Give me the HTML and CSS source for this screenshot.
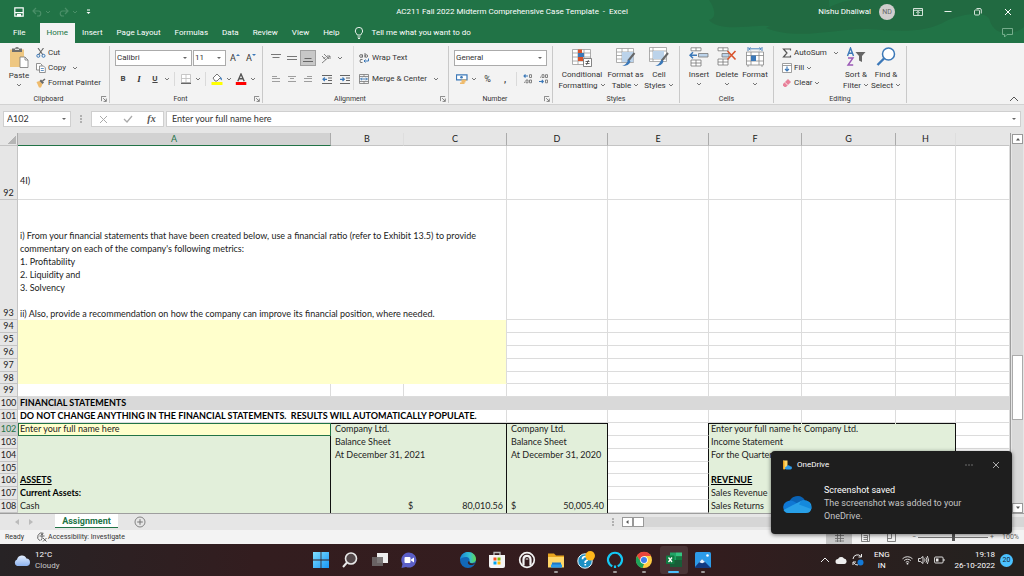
FILE: index.html
```html
<!DOCTYPE html>
<html lang="en">
<head>
<meta charset="utf-8">
<title>AC211 Fall 2022 Midterm Comprehensive Case Template - Excel</title>
<link rel="stylesheet" href="styles.css">
</head>
<body>
<svg class="defs" aria-hidden="true">
  <symbol id="chev" viewBox="0 0 6 6"><path d="M1 2l2 2 2-2" fill="none" stroke="#666" stroke-width=".9"/></symbol>
  <symbol id="launch" viewBox="0 0 7 7"><path d="M.5 6V.5H6M2.500 2.500l3.500 3.500M6.200 3v3.300H3" fill="none" stroke="#666" stroke-width=".9"/></symbol>
</svg>

<header class="top">
  <svg class="clouds" viewBox="0 0 340 43" preserveAspectRatio="none" aria-hidden="true">
    <path d="M25 0h120c0 14 3 22-8 26-20 7-45-2-62 0-18 1-42 4-50-6 8-2 6-12 0-20zM82 28c10-6 20-10 32-8 20 0 30-20 60-20h166v27c-12 10-30 8-34-6-2-12-32-6-44 0-22 13-50 10-78 8-30-1-70 12-102-1z" fill="#22643e" opacity=".6"/>
  </svg>
  <div class="titlebar">
    <div class="quick">
      <button aria-label="Save"><svg width="10" height="10" viewBox="0 0 10 10"><path d="M.8.8h8.400v8.400H.8z" fill="none" stroke="#fff" stroke-width="1.200"/><path d="M1 5h8v1.300H1zM3 7h4v2.500H3z" fill="#fff"/></svg></button>
      <button aria-label="Undo"><svg width="10" height="10" viewBox="0 0 10 10"><path d="M4 1L1 4l3 3M1 4h5.500c3 0 3 5 0 5H5" fill="none" stroke="#4a8f68" stroke-width="1.200"/></svg></button>
      <button class="tiny" aria-label="Undo list"><svg width="6" height="6" viewBox="0 0 6 6"><path d="M1 2l2 2 2-2" fill="none" stroke="#4a8f68"/></svg></button>
      <button aria-label="Redo"><svg width="10" height="10" viewBox="0 0 10 10"><path d="M6 1l3 3-3 3M9 4H3.500c-3 0-3 5 0 5H5" fill="none" stroke="#4a8f68" stroke-width="1.200"/></svg></button>
      <button class="tiny" aria-label="Redo list"><svg width="6" height="6" viewBox="0 0 6 6"><path d="M1 2l2 2 2-2" fill="none" stroke="#4a8f68"/></svg></button>
      <button class="tiny" aria-label="Customize toolbar"><svg width="5" height="6" viewBox="0 0 5 6"><path d="M1 .5h3v1H1zM.5 3h4l-2 2z" fill="#fff"/></svg></button>
    </div>
    <div class="doc">AC211 Fall 2022 Midterm Comprehensive Case Template &nbsp;-&nbsp; Excel</div>
    <div class="account">
      <span>Nishu Dhaliwal</span><span class="avatar">ND</span>
      <button aria-label="Ribbon display options"><svg width="10" height="10" viewBox="0 0 10 10"><path d="M.5 1.500h9v7h-9zM.5 3.300h9M5 8V4.500M3.300 6L5 4.300 6.700 6" fill="none" stroke="#e8f0ea" stroke-width=".9"/></svg></button>
      <button aria-label="Minimize"><svg width="10" height="10" viewBox="0 0 10 10"><path d="M1.500 4.500h7" stroke="#e8f0ea"/></svg></button>
      <button aria-label="Restore"><svg width="10" height="10" viewBox="0 0 10 10"><rect x="1.500" y="3" width="5" height="5" rx="1" fill="none" stroke="#e8f0ea" stroke-width=".9"/><path d="M3.500 1.500H7Q8.300 1.500 8.300 3v3.500" fill="none" stroke="#e8f0ea" stroke-width=".9"/></svg></button>
      <button aria-label="Close"><svg width="10" height="10" viewBox="0 0 10 10"><path d="M2 2l6 6M8 2L2 8" stroke="#fff"/></svg></button>
    </div>
  </div>
  <nav class="tabs">
    <button class="file">File</button><button class="active">Home</button><button>Insert</button><button>Page Layout</button><button>Formulas</button><button>Data</button><button>Review</button><button>View</button><button>Help</button>
    <button class="tell"><svg width="10" height="12" viewBox="0 0 10 12"><path d="M3.200 8C3 6.500 1.300 6 1.300 4a3.600 3.600 0 017.300 0C8.600 6 7 6.500 6.800 8zM3.500 10h3M4 11.500h2" fill="none" stroke="#fff" stroke-width=".9"/></svg>Tell me what you want to do</button>
    <button class="comments" aria-label="Comments"><svg width="11" height="10" viewBox="0 0 11 10"><path d="M.5.5h10v6H5L2.500 9V6.500h-2z" fill="none" stroke="#7fb394" stroke-width=".9"/></svg></button>
  </nav>
</header>

<section class="ribbon" aria-label="Home ribbon">
  <div class="group g-clip">
    <div class="body">
      <button class="big paste"><svg width="20" height="21" viewBox="0 0 20 21"><path d="M1 2.500h14V20H1z" fill="#eec782"/><path d="M3 1.500h3q0-1.500 2-1.500t2 1.500h3V5H3z" fill="#6d6d6d"/><path d="M6 2.300h4" stroke="#fff"/><path d="M11 10h5l3 3v7.500h-8z" fill="#fff" stroke="#777" stroke-width=".8"/><path d="M16 10v3h3" fill="none" stroke="#777" stroke-width=".8"/></svg><span>Paste</span><svg class="chev"><use href="#chev"/></svg></button>
      <div class="stack">
        <button><svg width="10" height="10" viewBox="0 0 10 10"><path d="M2 0l5 7M7.500 0l-5 7" stroke="#666" stroke-width="1.100"/><circle cx="2.300" cy="7.800" r="1.500" fill="none" stroke="#3b78b8"/><circle cx="7.500" cy="7.800" r="1.500" fill="none" stroke="#3b78b8"/></svg>Cut</button>
        <button><svg width="10" height="10" viewBox="0 0 10 10"><path d="M.5.5h4l1.500 1.500v5H.5z" fill="#fff" stroke="#777" stroke-width=".8"/><path d="M3.500 3h4l1.800 1.800v4.700H3.500z" fill="#fff" stroke="#777" stroke-width=".8"/><path d="M4.800 5.500h3M4.800 7.500h3" stroke="#3b78b8" stroke-width=".8"/></svg>Copy&nbsp;&nbsp;<svg class="chev"><use href="#chev"/></svg></button>
        <button><svg width="10" height="10" viewBox="0 0 10 10"><path d="M.5 4l3-1 3 3-1.500 3.500H3z" fill="#efbb6c"/><path d="M3.500 3l1.500-1.500L8 4.500 6.500 6z" fill="#666"/><path d="M6.500 3l2.500-2" stroke="#666" stroke-width="1.600"/></svg>Format Painter</button>
      </div>
    </div>
    <div class="label">Clipboard<svg class="launch"><use href="#launch"/></svg></div>
  </div>

  <div class="group g-font">
    <div class="body rows">
      <div class="row">
        <span class="pick w-font"><select aria-label="Font"><option>Calibri</option></select></span>
        <span class="pick w-size"><select aria-label="Font size"><option>11</option></select></span>
        <button class="ic fsize" aria-label="Increase font size">A<svg width="4" height="4" viewBox="0 0 4 4"><path d="M0 3l2-2 2 2" fill="#3b78b8"/></svg></button>
        <button class="ic fsize" aria-label="Decrease font size">A<svg width="4" height="4" viewBox="0 0 4 4"><path d="M0 1l2 2 2-2" fill="#3b78b8"/></svg></button>
      </div>
      <div class="row">
        <button class="ic w16"><b>B</b></button><button class="ic w16"><i>I</i></button><button class="ic w16"><u>U</u></button><button class="ic w10" aria-label="Underline style"><svg class="chev"><use href="#chev"/></svg></button>
        <i class="vr"></i>
        <button class="ic w16" aria-label="Borders"><svg width="10" height="10" viewBox="0 0 10 10"><path d="M.5 .5h9v8h-9zM5 .5v8M.5 4.500h9" fill="#fff" stroke="#bbb" stroke-width=".8"/><path d="M0 9.300h10" stroke="#444"/></svg></button><button class="ic w10" aria-label="Border list"><svg class="chev"><use href="#chev"/></svg></button>
        <i class="vr"></i>
        <button class="ic w16" aria-label="Fill color"><svg width="12" height="12" viewBox="0 0 12 12"><path d="M2 5l4-4 3.500 3.500L6 8H4z" fill="#fff" stroke="#666" stroke-width=".9"/><path d="M9.500 3.500q2 2 1 4l-1.500-2z" fill="#3b78b8"/><path d="M.5 9h11v3H.5z" fill="#ff0"/></svg></button><button class="ic w10" aria-label="Fill list"><svg class="chev"><use href="#chev"/></svg></button>
        <button class="ic w16" aria-label="Font color"><svg width="12" height="12" viewBox="0 0 12 12"><path d="M2.800 8.200L6 1l3.200 7.200M4 5.800h4" fill="none" stroke="#555" stroke-width="1.400"/><path d="M.8 9h10.500v3H.8z" fill="#f00"/></svg></button><button class="ic w10" aria-label="Color list"><svg class="chev"><use href="#chev"/></svg></button>
      </div>
    </div>
    <div class="label">Font<svg class="launch"><use href="#launch"/></svg></div>
  </div>

  <div class="group g-align">
    <div class="body">
      <div class="rows">
        <div class="row">
          <button class="ic w16" aria-label="Top align"><svg width="10" height="12" viewBox="0 0 10 12"><path d="M0 2.500h10M1.500 5.500h7" stroke="#777"/></svg></button>
          <button class="ic w16" aria-label="Middle align"><svg width="10" height="12" viewBox="0 0 10 12"><path d="M0 4.500h10M0 7.500h10" stroke="#777"/></svg></button>
          <button class="ic w16 on" aria-label="Bottom align"><svg width="10" height="12" viewBox="0 0 10 12"><path d="M1.500 6.500h7M0 9.500h10" stroke="#666"/></svg></button>
          <button class="ic w20" aria-label="Orientation"><svg width="11" height="11" viewBox="0 0 11 11"><path d="M1 3l4 4M3 1l5 5M4.500 4.500l-2 1M1 10l8-7M9 6V3H6" fill="none" stroke="#777" stroke-width=".9"/></svg></button><svg class="chev"><use href="#chev"/></svg>
        </div>
        <div class="row">
          <button class="ic w16" aria-label="Align left"><svg width="8" height="8" viewBox="0 0 8 8"><path d="M0 1.500h5M0 3.500h8M0 6.500h8" stroke="#888" stroke-width=".8"/></svg></button>
          <button class="ic w16" aria-label="Center"><svg width="8" height="8" viewBox="0 0 8 8"><path d="M0 1.500h8M2 3.500h4M0 6.500h8" stroke="#888" stroke-width=".8"/></svg></button>
          <button class="ic w16" aria-label="Align right"><svg width="8" height="8" viewBox="0 0 8 8"><path d="M3 1.500h5M0 3.500h8M0 6.500h8" stroke="#888" stroke-width=".8"/></svg></button>
          <button class="ic w20" aria-label="Decrease indent"><svg width="10" height="9" viewBox="0 0 10 9"><path d="M0 .5h10M6 3h4M6 5.500h4M0 8.500h10" stroke="#555" stroke-width=".9"/><path d="M5 4.300H1M2.800 2.500L1 4.300l1.800 1.700" fill="none" stroke="#3b78b8" stroke-width="1.200"/></svg></button>
          <button class="ic w16" aria-label="Increase indent"><svg width="10" height="9" viewBox="0 0 10 9"><path d="M0 .5h10M6 3h4M6 5.500h4M0 8.500h10" stroke="#555" stroke-width=".9"/><path d="M0 4.300h4M2.500 2.500l1.800 1.800L2.500 6" fill="none" stroke="#3b78b8" stroke-width="1.200"/></svg></button>
        </div>
      </div>
      <div class="rows wrapcol">
        <div class="row"><button class="txt"><svg width="10" height="10" viewBox="0 0 10 10"><circle cx="2" cy="3" r="1.400" fill="none" stroke="#666" stroke-width=".9"/><path d="M3.500 1.500V4.500M6 0v4.500" stroke="#666" stroke-width=".9"/><circle cx="7.300" cy="3" r="1.300" fill="none" stroke="#666" stroke-width=".9"/><path d="M3.500 6.500H1.500q-1 1.500 0 3h2" fill="none" stroke="#666" stroke-width=".9"/><path d="M9.500 5.500V8H5M6.500 6.500L5 8l1.500 1.500" fill="none" stroke="#3b78b8"/></svg>Wrap Text</button></div>
        <div class="row"><button class="txt"><svg width="10" height="10" viewBox="0 0 10 10"><path d="M.5.5h9v9h-9zM.5 2.500h9M.5 7.500h9M5 .5v2M5 7.500v2" fill="none" stroke="#777" stroke-width=".8"/><path d="M1.500 5h7M3 3.700L1.700 5 3 6.300M7 3.700L8.300 5 7 6.300" fill="none" stroke="#3b78b8" stroke-width=".9"/></svg>Merge &amp; Center</button><svg class="chev"><use href="#chev"/></svg></div>
      </div>
    </div>
    <div class="label">Alignment<svg class="launch"><use href="#launch"/></svg></div>
  </div>

  <div class="group g-num">
    <div class="body rows">
      <div class="row"><span class="pick w-num"><select aria-label="Number format"><option>General</option></select></span></div>
      <div class="row">
        <button class="ic w16" aria-label="Accounting format"><svg width="12" height="11" viewBox="0 0 12 11"><path d="M.5.8h10.500v5H.5z" fill="#fff" stroke="#3b78b8" stroke-width="1.200"/><circle cx="5.500" cy="3.300" r="1.300" fill="#3b78b8"/><path d="M5.500 5.500h5v1.500h-1v1.500H8.500V10H4V8.500h1.500z" fill="#efbb6c"/></svg></button><button class="ic w10" aria-label="Currency list"><svg class="chev"><use href="#chev"/></svg></button>
        <button class="ic w18 pct">%</button><button class="ic w16 pct"><b>,</b></button>
        <i class="vr"></i>
        <button class="ic w16" aria-label="Increase decimal"><svg width="10" height="10" viewBox="0 0 10 10"><path d="M5 2H1M2.500.5L1 2l1.500 1.500" fill="none" stroke="#3b78b8" stroke-width="1.100"/><path d="M6.500.7h2v2.800h-2zM3 6h2v2.800H3zM6.500 6h2v2.800h-2zM1 8.300h1" fill="none" stroke="#777" stroke-width=".9"/></svg></button>
        <button class="ic w16" aria-label="Decrease decimal"><svg width="10" height="10" viewBox="0 0 10 10"><path d="M0 7.500h4M2.800 6l1.500 1.500L2.800 9" fill="none" stroke="#3b78b8" stroke-width="1.100"/><path d="M3 .7h2v2.800H3zM6.500.7h2v2.800h-2zM6.500 6h2v2.800h-2zM1 3.200h1" fill="none" stroke="#777" stroke-width=".9"/></svg></button>
      </div>
    </div>
    <div class="label">Number<svg class="launch"><use href="#launch"/></svg></div>
  </div>

  <div class="group g-styles">
    <div class="body">
      <button class="big w48"><svg width="20" height="20" viewBox="0 0 20 20"><path d="M.5 2.500h18v15H.5zM.5 6h18M.5 10h18M.5 14h18M6 2.500v15M12 2.500v15" fill="#fff" stroke="#999" stroke-width=".8"/><path d="M6 2.500h4V6H6zM6 10h3v4H6z" fill="#d9532c"/><path d="M6 6h6v4H6z" fill="#3b78b8"/><path d="M6 10h5v4H6z" fill="#d9532c"/><path d="M11.500 11.500h8v8h-8z" fill="#fff" stroke="#666" stroke-width=".8"/><path d="M13.500 14.500h4M13.500 16.500h4M16.500 13l-2 5" stroke="#444" stroke-width=".8"/></svg><span>Conditional</span><span>Formatting <svg class="chev"><use href="#chev"/></svg></span></button>
      <button class="big w39"><svg width="20" height="20" viewBox="0 0 20 20"><path d="M.5 1.500h17v14H.5zM.5 5h17M.5 8.500h17M.5 12h17M6 1.500v14M12 1.500v14" fill="#fff" stroke="#999" stroke-width=".8"/><path d="M6 5h11.500v10H6z" fill="#bcd3ea"/><path d="M18.500 6L12 14" stroke="#666" stroke-width="2"/><path d="M12.500 12.500l2 2Q13 19 6 19q4-1 6.500-6.500z" fill="#3b78b8"/></svg><span>Format as</span><span>Table <svg class="chev"><use href="#chev"/></svg></span></button>
      <button class="big w28"><svg width="20" height="20" viewBox="0 0 20 20"><path d="M.5 .5h17v14H.5zM.5 4h17M4 .5v14M.5 12h17" fill="#fff" stroke="#999" stroke-width=".8"/><path d="M4 4h11v8H4z" fill="#bcd3ea"/><path d="M19 6l-6.500 8" stroke="#666" stroke-width="2"/><path d="M12.500 12.500l2 2Q13 19 6 19q4-1 6.500-6.500z" fill="#3b78b8"/></svg><span>Cell</span><span>Styles <svg class="chev"><use href="#chev"/></svg></span></button>
    </div>
    <div class="label">Styles</div>
  </div>

  <div class="group g-cells">
    <div class="body">
      <button class="big w28"><svg width="20" height="20" viewBox="0 0 20 20"><path d="M2 .8h10v3H2zM7 .8v3M2 13h10v6H2zM7 13v6M2 16h10" fill="#fff" stroke="#777" stroke-width=".8"/><path d="M9.500 6.500h9.500v3.500H9.500z" fill="#bcd3ea" stroke="#777" stroke-width=".8"/><path d="M8 8.300H1M4 5.300L1 8.300l3 3" fill="none" stroke="#3b78b8" stroke-width="1.500"/></svg><span>Insert</span><svg class="chev"><use href="#chev"/></svg></button>
      <button class="big w28"><svg width="20" height="20" viewBox="0 0 20 20"><path d="M1 .8h10v3H1zM6 .8v3M1 12h10v6H1zM6 12v6M1 15h10" fill="#fff" stroke="#777" stroke-width=".8"/><path d="M5 6.500h7V10H5z" fill="#bcd3ea" stroke="#777" stroke-width=".8"/><path d="M10.500 4l8 8.500M18.500 4l-8 8.500" stroke="#d9532c" stroke-width="1.600"/></svg><span>Delete</span><svg class="chev"><use href="#chev"/></svg></button>
      <button class="big w28"><svg width="20" height="20" viewBox="0 0 20 20"><path d="M1.500 5h17v13h-17zM1.500 8.500h17M1.500 14h17M6 5v13M14 5v13M3 18v2M17 18v2" fill="#fff" stroke="#888" stroke-width=".8"/><path d="M6 8.500h5V14H6z" fill="#3b78b8"/><path d="M4 1.800h12M5.500.3L4 1.800l1.500 1.500M14.500.3L16 1.800l-1.500 1.500M3 0v4M17 0v4" fill="none" stroke="#3b78b8" stroke-width=".9"/></svg><span>Format</span><svg class="chev"><use href="#chev"/></svg></button>
    </div>
    <div class="label">Cells</div>
  </div>

  <div class="group g-edit">
    <div class="body">
      <div class="stack">
        <button><svg width="10" height="10" viewBox="0 0 10 10"><path d="M8.500 2.500V1H1.500L5 5 1.500 9h7V7.500" fill="none" stroke="#555" stroke-width="1.200"/></svg>AutoSum&nbsp;&nbsp;<svg class="chev"><use href="#chev"/></svg></button>
        <button><svg width="10" height="10" viewBox="0 0 10 10"><path d="M.5.5h9v9h-9zM.5 2.500h9" fill="#fff" stroke="#888" stroke-width=".8"/><path d="M5 3.500v4.500M3 6l2 2 2-2" fill="none" stroke="#3b78b8" stroke-width="1.200"/></svg>Fill<svg class="chev"><use href="#chev"/></svg></button>
        <button><svg width="10" height="10" viewBox="0 0 10 10"><path d="M1 6l5-5 3 3-5 5H2.500L1 7.500z" fill="#e8819a"/><path d="M3 4.300l2.800 3" stroke="#fff" stroke-width=".8"/></svg>Clear<svg class="chev"><use href="#chev"/></svg></button>
      </div>
      <button class="big w30"><svg width="20" height="20" viewBox="0 0 20 20"><path d="M1.500 9L4.500 1l3 8M2.700 6.300h3.700" fill="none" stroke="#3b78b8" stroke-width="1.400"/><path d="M2 11h5l-5 7h5.200" fill="none" stroke="#9b59b6" stroke-width="1.400"/><path d="M9.500 5h10l-3.500 4v6l-3-1.500V9z" fill="#666"/></svg><span>Sort &amp;</span><span>Filter <svg class="chev"><use href="#chev"/></svg></span></button>
      <button class="big w30"><svg width="20" height="20" viewBox="0 0 20 20"><circle cx="12.500" cy="7" r="6" fill="#fff" stroke="#3b78b8" stroke-width="1.500"/><path d="M8 11.500L1.500 18" stroke="#3b78b8" stroke-width="2.400"/></svg><span>Find &amp;</span><span>Select <svg class="chev"><use href="#chev"/></svg></span></button>
    </div>
    <div class="label">Editing</div>
  </div>
  <button class="collapse" aria-label="Collapse the ribbon"><svg width="10" height="6" viewBox="0 0 10 6"><path d="M1 5l4-4 4 4" fill="none" stroke="#555"/></svg></button>
</section>

<div class="formulabar">
  <span class="pick namebox"><input type="text" aria-label="Name box" value="A102"></span>
  <span class="grip"></span>
  <div class="fx">
    <button aria-label="Cancel"><svg width="9" height="9" viewBox="0 0 9 9"><path d="M1 1l7 7M8 1L1 8" stroke="#aaa"/></svg></button>
    <button aria-label="Enter"><svg width="10" height="8" viewBox="0 0 10 8"><path d="M1 4l3 3 5-6" fill="none" stroke="#aaa" stroke-width="1.300"/></svg></button>
    <button aria-label="Insert function"><i>fx</i></button>
  </div>
  <span class="pick formula"><input type="text" aria-label="Formula" value="Enter your full name here"></span>
</div>

<main class="sheet">
  <div class="cells">
  <table>
    <colgroup><col class="c-n"><col class="c-a"><col class="c-b"><col class="c-c"><col class="c-d"><col class="c-e"><col class="c-f"><col class="c-g"><col class="c-h"><col></colgroup>
    <thead><tr><th class="corner"></th><th class="sel">A</th><th class="soft">B</th><th>C</th><th>D</th><th>E</th><th>F</th><th>G</th><th class="soft">H</th><th class="last"></th></tr></thead>
    <tbody>
      <tr class="r92"><th>92</th><td colspan="3">4I)<br>&nbsp;</td><td></td><td></td><td></td><td></td><td></td><td></td></tr>
      <tr class="r93"><th>93</th><td colspan="3" class="wrap">i) From your financial statements that have been created below, use a financial ratio (refer to Exhibit 13.5) to provide<br>commentary on each of the company's following metrics:<br>1. Profitability<br>2. Liquidity and<br>3. Solvency<br><br>ii) Also, provide a recommendation on how the company can improve its financial position, where needed.</td><td></td><td></td><td></td><td></td><td></td><td></td></tr>
      <tr><th>94</th><td colspan="3" rowspan="5" class="yellow"></td><td></td><td></td><td></td><td></td><td></td><td></td></tr>
      <tr><th>95</th><td></td><td></td><td></td><td></td><td></td><td></td></tr>
      <tr><th>96</th><td></td><td></td><td></td><td></td><td></td><td></td></tr>
      <tr><th>97</th><td></td><td></td><td></td><td></td><td></td><td></td></tr>
      <tr class="short"><th>98</th><td></td><td></td><td></td><td></td><td></td><td></td></tr>
      <tr><th>99</th><td></td><td></td><td></td><td></td><td></td><td></td><td></td><td></td><td></td></tr>
      <tr><th>100</th><td colspan="9" class="band">FINANCIAL STATEMENTS</td></tr>
      <tr><th>101</th><td colspan="3" class="bold">DO NOT CHANGE ANYTHING IN THE FINANCIAL STATEMENTS.&nbsp; RESULTS WILL AUTOMATICALLY POPULATE.</td><td></td><td></td><td></td><td></td><td></td><td></td></tr>
      <tr class="boxtop"><th class="sel">102</th><td class="active">Enter your full name here</td><td class="g gr in" colspan="2">Company Ltd.</td><td class="g gr in">Company Ltd.</td><td class="pre"></td><td class="g">Enter your full name he</td><td class="g">Company Ltd.</td><td class="g gr"></td><td></td></tr>
      <tr><th>103</th><td class="g gr"></td><td class="g gr in" colspan="2">Balance Sheet</td><td class="g gr in">Balance Sheet</td><td class="pre"></td><td class="g">Income Statement</td><td class="g"></td><td class="g gr"></td><td></td></tr>
      <tr><th>104</th><td class="g gr"></td><td class="g gr in" colspan="2">At December 31, 2021</td><td class="g gr in">At December 31, 2020</td><td class="pre"></td><td class="g">For the Quarter</td><td class="g"></td><td class="g gr"></td><td></td></tr>
      <tr class="short"><th>105</th><td class="g gr"></td><td class="g"></td><td class="g gr"></td><td class="g gr"></td><td class="pre"></td><td class="g"></td><td class="g"></td><td class="g gr"></td><td></td></tr>
      <tr><th>106</th><td class="g gr bold"><u>ASSETS</u></td><td class="g"></td><td class="g gr"></td><td class="g gr"></td><td class="pre"></td><td class="g bold"><u>REVENUE</u></td><td class="g"></td><td class="g gr"></td><td></td></tr>
      <tr><th>107</th><td class="g gr bold">Current Assets:</td><td class="g"></td><td class="g gr"></td><td class="g gr"></td><td class="pre"></td><td class="g">Sales Revenue</td><td class="g"></td><td class="g gr"></td><td></td></tr>
      <tr><th>108</th><td class="g gr">Cash</td><td class="g"></td><td class="g gr in"><span class="money"><span>$</span><span>80,010.56</span></span></td><td class="g gr in"><span class="money"><span>$</span><span>50,005.40</span></span></td><td class="pre"></td><td class="g">Sales Returns</td><td class="g"></td><td class="g gr"></td><td></td></tr>
      <tr><th></th><td class="g gr"></td><td class="g"></td><td class="g gr"></td><td class="g gr"></td><td class="pre"></td><td class="g"></td><td class="g"></td><td class="g gr"></td><td></td></tr>
    </tbody>
  </table>
  </div>
  <div class="vscroll">
    <button aria-label="Scroll up"><svg width="6" height="4" viewBox="0 0 6 4"><path d="M1 3.500l2-2.500 2 2.500z" fill="#555"/></svg></button>
    <div class="vtrack"><div class="vthumb"></div></div>
    <button aria-label="Scroll down"><svg width="6" height="4" viewBox="0 0 6 4"><path d="M1 .5l2 2.500L5 .5z" fill="#555"/></svg></button>
  </div>
</main>

<div class="sheettabs">
  <button class="nav" aria-label="Previous sheet"><svg width="4" height="6" viewBox="0 0 4 6"><path d="M4 0v6L0 3z" fill="#bbb"/></svg></button>
  <button class="nav" aria-label="Next sheet"><svg width="4" height="6" viewBox="0 0 4 6"><path d="M0 0v6l4-3z" fill="#bbb"/></svg></button>
  <button class="tab">Assignment</button>
  <button class="add" aria-label="New sheet"><svg width="12" height="12" viewBox="0 0 12 12"><circle cx="6" cy="6" r="5" fill="none" stroke="#777" stroke-width=".9"/><path d="M6 3.200v5.600M3.200 6h5.600" stroke="#777"/></svg></button>
  <div class="hscroll"><span class="grip"></span><button aria-label="Scroll left"><svg width="4" height="6" viewBox="0 0 4 6"><path d="M3.500 1v4L1 3z" fill="#555"/></svg></button><div class="hthumb"></div><div class="htrack"></div></div>
</div>

<footer class="status">
  <span>Ready</span>
  <button class="access"><svg width="10" height="10" viewBox="0 0 10 10"><path d="M6.500 1.300A4 4 0 103 8.700" fill="none" stroke="#555" stroke-width=".9"/><circle cx="5" cy="2.500" r=".9" fill="#555"/><path d="M2.500 4h5M5 4v2.500L3.800 8.500M6 6l3.500 3.500M9.500 6L6 9.500" fill="none" stroke="#555" stroke-width=".9"/></svg>Accessibility: Investigate</button>
  <div class="views">
    <button class="on" aria-label="Normal view"><svg width="9" height="9" viewBox="0 0 9 9"><path d="M0 2.500h9M0 5.500h9M0 8h9M2.500 0v9M5.500 0v9" stroke="#666" stroke-width=".8"/></svg></button>
    <button aria-label="Page layout view"><svg width="9" height="9" viewBox="0 0 9 9"><path d="M.5.5h8v8h-8zM2.500 2.500h4v6M2.500 4.500h4M2.500 6.500h4" fill="none" stroke="#666" stroke-width=".8"/></svg></button>
    <button aria-label="Page break view"><svg width="9" height="9" viewBox="0 0 9 9"><path d="M.5.5h8v8h-8zM.5 5.500h4v-5" fill="none" stroke="#666" stroke-width=".8"/></svg></button>
    <span class="zoom">−<input type="range" min="0" max="100" value="50" aria-label="Zoom">+</span><span class="pc">100%</span>
  </div>
</footer>

<div class="taskbar">
  <div class="weather"><svg width="18" height="13" viewBox="0 0 18 13"><defs><linearGradient id="wc" x2="0" y2="1"><stop stop-color="#e4efff"/><stop offset="1" stop-color="#8db2ee"/></linearGradient></defs><path d="M4 12a3.500 3.500 0 010-6.500A5 5 0 0113.500 4.500 3.800 3.800 0 0114 12z" fill="url(#wc)"/></svg><div>12°C<br><span>Cloudy</span></div></div>
  <div class="apps">
    <button aria-label="Start"><svg viewBox="0 0 18 18"><defs><linearGradient id="wn" x2="1" y2="1"><stop stop-color="#7fe0ff"/><stop offset="1" stop-color="#1795f5"/></linearGradient></defs><path d="M1 1h7.600v7.600H1zM9.400 1H17v7.600H9.400zM1 9.400h7.600V17H1zM9.400 9.400H17V17H9.400z" fill="url(#wn)"/></svg></button>
    <button aria-label="Search"><svg viewBox="0 0 18 18"><circle cx="10" cy="7.500" r="5.500" fill="#54484a" stroke="#e8e8e8" stroke-width="1.600"/><path d="M6 11.500L2 16" stroke="#e8e8e8" stroke-width="2"/></svg></button>
    <button aria-label="Task view"><svg viewBox="0 0 18 18"><path d="M6 2h11v10H6z" fill="#eee"/><path d="M1 6h11v9H1z" fill="#6f6a6a" opacity=".9"/></svg></button>
    <button aria-label="Chat"><svg viewBox="0 0 18 18"><path d="M9 1.500a7.500 7.500 0 11-3 14.400L1.500 17l1-4A7.500 7.500 0 019 1.500z" fill="#5b5fc7"/><rect x="4.500" y="6" width="6" height="6" rx="1" fill="#fff"/><path d="M11 8.500l3-2v5l-3-2z" fill="#fff"/></svg></button>
    <span></span>
    <button aria-label="Edge"><svg viewBox="0 0 18 18"><defs><linearGradient id="eg" x2="1"><stop stop-color="#1683d8"/><stop offset=".6" stop-color="#35c1d0"/><stop offset="1" stop-color="#62d84e"/></linearGradient></defs><circle cx="9" cy="9" r="8" fill="#1268b8"/><path d="M1 8.500C2 3 5.500 1 9 1c5 0 8 3.500 8 7 0 3-2.500 4-4.500 4-2.500 0-2.500-1-2-2C11 7 9 6 7 6 4 6 2 7 1 8.500z" fill="url(#eg)"/><path d="M10.500 10c-.5 1 .5 2.500 3 2.500 1 0 2-.2 3-.8-1.500 2-3 2.500-5 2.300-3-.5-3.500-3.500-1-4z" fill="#3a2023"/></svg></button>
    <button aria-label="Store"><svg viewBox="0 0 18 18"><path d="M6 4V1.500h6V4" fill="none" stroke="#bbb" stroke-width="1.300"/><path d="M1 4h16v11a2 2 0 01-2 2H3a2 2 0 01-2-2z" fill="#f4f4f4"/><path d="M5.500 6.500h3v3h-3z" fill="#f25022"/><path d="M9.500 6.500h3v3h-3z" fill="#7fba00"/><path d="M5.500 10.500h3v3h-3z" fill="#00a4ef"/><path d="M9.500 10.500h3v3h-3z" fill="#ffb900"/></svg></button>
    <button aria-label="Media"><svg viewBox="0 0 18 18"><circle cx="9" cy="9" r="7.300" fill="none" stroke="#f3f3f3" stroke-width="1.700"/><path d="M5.500 14.500V8.500Q5.500 4.800 9 4.800t3.500 3.700v6" fill="none" stroke="#f3f3f3" stroke-width="2.200"/><path d="M7.700 8h2.600" stroke="#f3f3f3" stroke-width="1"/></svg></button>
    <button class="run" aria-label="File Explorer"><svg viewBox="0 0 18 18"><path d="M1 2.500h6l2 2h8V15H1z" fill="#e9a51f"/><path d="M1 6h16v10.500H1z" fill="#ffd667"/><path d="M5 11.500h9v5H5z" fill="#1d78c8"/><path d="M4 13.500h11v3H4z" fill="#2d9be8"/></svg></button>
    <button aria-label="Get help"><svg viewBox="0 0 18 18"><circle cx="8" cy="10" r="7.200" fill="#1a8fc4" stroke="#e8f6fc"/><path d="M5.500 8.200q0-2.700 2.700-2.700T10.800 8q0 1.300-2.500 2.500v1.500M8.300 13v1.500" fill="none" stroke="#fff" stroke-width="1.700"/><circle cx="13.200" cy="4.800" r="4.800" fill="#ffb71b"/></svg></button>
    <button class="run" aria-label="Alexa"><svg viewBox="0 0 18 18"><path d="M9 17v-2.500M6.300 15.200A7 7 0 1111.700 15.200" fill="none" stroke="#14c8f5" stroke-width="2.200"/></svg></button>
    <button class="run" aria-label="Chrome"><svg viewBox="0 0 18 18"><circle cx="9" cy="9" r="8" fill="#ffcd42"/><path d="M2 5A8 8 0 0116 5H9L6 11z" fill="#e8453c"/><path d="M2 5l4 6 3 2-1.500 4A8 8 0 012 5z" fill="#1ea35a"/><circle cx="9" cy="9" r="3.800" fill="#fff"/><circle cx="9" cy="9" r="3" fill="#3b7ded"/></svg></button>
    <button class="run cur" aria-label="Excel"><svg viewBox="0 0 18 18"><path d="M5 1.500h6V9H5z" fill="#21a366"/><path d="M11 1.500h6v4h-6z" fill="#33c481"/><path d="M11 5.500h6v4h-6z" fill="#107c41"/><path d="M5 9h12v7H5z" fill="#185c37"/><rect x="1" y="4.500" width="8.500" height="8.500" rx="1" fill="#107c41"/><path d="M3.500 6.500l3.500 4.500M7 6.500L3.500 11" stroke="#fff" stroke-width="1.300"/></svg></button>
    <button class="run" aria-label="Photos"><svg viewBox="0 0 18 18"><rect x="1" y="1" width="16" height="16" rx="1.500" fill="#2d9be8"/><path d="M1 16L8 8l9 9H1z" fill="#123a80"/><path d="M5.300 11.200L8 8l3 3-2.800 1.300z" fill="#e6f2fd"/><circle cx="13.500" cy="4.500" r="1.300" fill="#fff"/></svg></button>
  </div>
  <div class="tray">
    <svg width="10" height="8" viewBox="0 0 10 8"><path d="M1 6l4-4 4 4" fill="none" stroke="#eee"/></svg>
    <svg width="12" height="9" viewBox="0 0 12 9"><path d="M3 8a2.500 2.500 0 010-5 3.500 3.500 0 016-.5A2.800 2.800 0 019.500 8z" fill="#eee"/></svg>
    <svg width="12" height="12" viewBox="0 0 12 12"><path d="M1 5a4.500 4.500 0 018-2.500M9.500 0v3h-3M1 11V8h3M1.500 8.500A4.500 4.500 0 006 11" fill="none" stroke="#eee"/><circle cx="8.500" cy="8.500" r="3" fill="#1479d6"/></svg>
    <div class="lang">ENG<br>IN</div>
    <svg width="11" height="10" viewBox="0 0 11 10"><path d="M.5 3.800a7 7 0 0110 0M2.200 5.600a4.600 4.600 0 016.600 0M3.800 7.300a2.400 2.400 0 013.400 0" fill="none" stroke="#eee" stroke-width=".9"/><circle cx="5.500" cy="8.700" r=".9" fill="#eee"/></svg>
    <svg width="11" height="10" viewBox="0 0 11 10"><path d="M.5 3.500h2L5 1.500v7L2.500 6.500h-2zM6.500 3.500q1.200 1.500 0 3M8 2.300q2 2.700 0 5.400M9.300 1q2.500 4 0 8" fill="none" stroke="#eee" stroke-width=".9"/></svg>
    <svg width="11" height="8" viewBox="0 0 11 8"><rect x=".6" y="1" width="8.500" height="6" rx="1" fill="none" stroke="#eee" stroke-width=".9"/><path d="M2 2.500h2.500v3H2zM9.500 3h1v2h-1z" fill="#eee"/></svg>
    <div class="clock">19:18<br>26-10-2022</div>
    <span class="badge">20</span>
  </div>
</div>

<aside class="toast">
  <div class="thead">
    <svg width="10" height="10" viewBox="0 0 10 10"><path d="M1 .5h4.500V9H1z" fill="#ffd667"/><path d="M1 .5l1.500 1V10L1 9z" fill="#e9a51f"/><path d="M4.500 9.500a1.500 1.500 0 010-3 2 2 0 013.500-.3 1.600 1.600 0 01.5 3.300z" fill="#2d9be8"/></svg>
    <span>OneDrive</span>
    <button aria-label="More"><svg width="10" height="10" viewBox="0 0 10 10"><path d="M1.500 5h1M4.500 5h1M7.500 5h1" stroke="#bbb"/></svg></button>
    <button aria-label="Dismiss"><svg width="10" height="10" viewBox="0 0 10 10"><path d="M2 2l6 6M8 2L2 8" stroke="#bbb" stroke-width=".9"/></svg></button>
  </div>
  <div class="tbody">
    <svg width="30" height="20" viewBox="0 0 30 20"><path d="M7 10a8.500 8.500 0 0116-3.500L17 12z" fill="#0a63b5"/><path d="M6.500 19A6 6 0 014 8a7.500 7.500 0 018-.5L24 15l-2 4z" fill="#0f78d4"/><path d="M11 11l7-3.500A6.500 6.500 0 0124 7q5.500.5 5.500 6 0 6-5.500 6H6.500Q3 19 1.500 16z" fill="#28a0e8"/><path d="M17 10.500l2-3.500q5-1.500 7 .5 3.500 2.500 3.300 7.500z" fill="#1489dc"/></svg>
    <div><div class="tt">Screenshot saved</div><div class="td">The screenshot was added to your OneDrive.</div></div>
  </div>
</aside>
</body>
</html>
```
FILE: styles.css
```css
* { box-sizing: border-box; }
html, body { height: 100%; margin: 0; }
body {
  display: flex;
  flex-direction: column;
  overflow: hidden;
  position: relative;
  font: 8px/12px Roboto, "Noto Sans", sans-serif;
  color: #333;
  background: #e6e6e6;
}
button, input, select {
  font: inherit;
  color: inherit;
  margin: 0;
  padding: 0;
  border: 0;
  background: none;
  white-space: nowrap;
}
button {
  display: inline-flex;
  align-items: center;
  justify-content: center;
}
svg { display: block; flex: none; }
.defs { position: absolute; width: 0; height: 0; }
.chev { width: 6px; height: 6px; display: inline-block; }

/* title and tabs */
.top { position: relative; background: #217346; color: #fff; }
.clouds { position: absolute; right: 0; top: 0; width: 340px; height: 43px; }
.titlebar {
  position: relative;
  height: 23px;
  display: grid;
  grid-template-columns: 1fr auto 1fr;
  align-items: center;
}
.quick { display: flex; align-items: center; gap: 8px; padding-left: 14px; }
.quick .tiny { margin-left: -5px; }
.quick .tiny:last-child { margin-left: 0; }
.account { display: flex; align-items: center; justify-content: flex-end; gap: 20px; padding-right: 11px; height: 20px; }
.avatar {
  width: 16px; height: 16px; line-height: 16px;
  margin-left: -12px; margin-right: -2px;
  border-radius: 50%;
  background: #d0cece; color: #666;
  text-align: center;
  font-size: 7px;
}
.tabs { position: relative; display: flex; height: 20px; }
.tabs button { padding: 0 7px; }
.tabs .file { padding: 0 14px 0 13px; }
.tabs .active { background: #f3f3f3; color: #217346; }
.tabs .tell { gap: 8px; }
.tabs .comments { margin-left: auto; padding: 0 11px; }

/* ribbon */
.ribbon {
  display: flex;
  height: 62px;
  background: #f3f3f3;
  border-bottom: 1px solid #d2d2d2;
}
.group {
  display: flex;
  flex-direction: column;
  justify-content: space-between;
  margin: 3px 0 1px;
  border-right: 1px solid #c9c9c9;
}
.g-clip { width: 110px; }
.g-font { width: 153px; }
.g-align { width: 186px; }
.g-num { width: 104px; }
.g-styles { width: 127px; }
.g-cells { width: 94px; }
.g-edit { width: 133px; }
.group .body { display: flex; padding-left: 5px; }
.label {
  position: relative;
  text-align: center;
  font-size: 7px;
  line-height: 8px;
}
.g-clip .label { padding-right: 12px; }
.g-font .label, .g-align .label, .g-num .label { padding-right: 11px; }
.launch { position: absolute; right: 2px; top: 1px; width: 6px; height: 6px; }
.big { flex-direction: column; align-items: center; justify-content: flex-start; line-height: 11px; }
.big > svg:first-child { margin: 1px 0 2px; }
.big .chev { margin-top: 1px; }
.paste { width: 28px; }
.w48 { width: 48px; }
.w39 { width: 39px; }
.w30 { width: 30px; }
.w28 { width: 28px; }
.stack { display: flex; flex-direction: column; align-items: flex-start; gap: 3px; padding: 1px 0 0 3px; }
.stack button { gap: 2px; height: 12px; }
.rows, .body.rows { display: flex; flex-direction: column; gap: 5px; padding-top: 4px; }
.row { display: flex; align-items: center; height: 16px; }
.pick { position: relative; display: inline-flex; height: 16px; border: 1px solid #ababab; background: #fff; }
.pick::after {
  content: "";
  position: absolute;
  right: 4px;
  top: 6px;
  border: 2px solid transparent;
  border-top-color: #666;
}
.pick select, .pick input { width: 100%; padding: 0 1px; appearance: none; outline: 0; }
.w-font { width: 77px; margin-right: 1px; }
.w-size { width: 33px; margin-right: 1px; }
.w-num { width: 93px; }
.w10 { width: 8px; }
.w16 { width: 16px; }
.w18 { width: 19px; }
.w20 { width: 21px; }
.ic { height: 16px; }
.ic b, .ic u { font-weight: 700; color: #444; }
.ic i { font-family: "Liberation Serif", serif; font-weight: 700; font-size: 9px; }
.fsize { width: 16px; font-size: 9px; align-items: center; }
.fsize svg { margin-bottom: 6px; }
.on { background: #c8c8c8; outline: 1px solid #a0a0a0; outline-offset: -1px; }
.vr { width: 1px; height: 14px; margin: 0 3px; background: #dadada; }
.wrapcol { border-left: 1px solid #dcdcdc; padding-left: 5px; height: 44px; }
.txt { gap: 3px; }
.wrapcol .chev { margin-left: 6px; }
.pct { font-size: 9px; }
.group.g-styles .body { padding-left: 5px; }
.group.g-cells .body { padding-left: 5px; }
.g-edit .stack { width: 62px; }
.collapse { margin: auto 5px 2px auto; }

/* formula bar */
.formulabar { display: flex; align-items: center; height: 28px; padding: 0 3px; }
.formulabar .pick { background: #fff; border-color: #cfcfcf; font: 9px/12px Lato, sans-serif; }
.namebox { width: 68px; }
.namebox input, .formula input { padding-left: 3px; }
.grip { width: 2px; height: 8px; margin: 0 9px; border-left: 2px dotted #b0b0b0; }
.fx {
  display: flex;
  height: 16px;
  width: 73px;
  margin-right: 2px;
  justify-content: space-around;
  background: #fff;
  border: 1px solid #cfcfcf;
}
.fx i { font: italic bold 10px/12px "Liberation Serif", serif; color: #555; }
.formulabar .formula { flex: 1; }
.formula input { padding-left: 5px; }

/* grid */
.sheet { display: flex; flex: 1; min-height: 0; border-bottom: 1px solid #9e9e9e; }
.cells { flex: 1; overflow: hidden; border-right: 1px solid #9e9e9e; background: #fff; }
table {
  width: 100%;
  table-layout: fixed;
  border-spacing: 0;
  font: 9px/12px Lato, sans-serif;
  color: #222;
}
.c-n { width: 18px; }
.c-a { width: 313px; }
.c-b { width: 73px; }
.c-c { width: 103px; }
.c-d, .c-e { width: 101px; }
.c-f { width: 93px; }
.c-g { width: 94px; }
.c-h { width: 60px; }
th, td {
  height: 13px;
  padding: 0 1px 0 2px;
  border-right: 1px solid #dcdcdc;
  border-bottom: 1px solid #dcdcdc;
  text-align: left;
  white-space: nowrap;
  overflow: hidden;
  vertical-align: bottom;
}
th {
  padding: 0;
  background: #e6e6e6;
  border-color: #c4c4c4;
  font-weight: 400;
  text-align: center;
}
thead th { border-right-color: #ababab; }
thead .soft { border-right-color: #dedede; }
thead .last { border-right-color: #e6e6e6; }
thead .sel { border-bottom-color: #217346; }
.corner { background: linear-gradient(135deg, transparent 50%, #b5b5b5 50%) right 1px bottom 1px / 9px 9px no-repeat #e6e6e6; }
.sel { background: #d2d2d2; color: #217346; }
.short { line-height: 11px; }
.short th, .short td { height: 12px; }
tr.r92 td, tr.r92 th { height: 54px; }
tr.r93 td, tr.r93 th { height: 120px; }
tr.r93 td { line-height: 13px; }
tr.r93 td.wrap { border-bottom: 0; }
td.yellow { background: #ffc; border-bottom-color: #ffc; }
td.band { background: #d9d9d9; border-color: #d9d9d9; font-weight: 700; color: #000; }
.bold { font-weight: 700; color: #000; }
td.g { background: #e2efda; border-right-color: #e2efda; border-bottom: 0; padding-bottom: 1px; }
.boxtop td.g { box-shadow: inset 0 1px #111; }
td.gr { border-right-color: #111; }
td.pre { border-right-color: #111; }
td.in { padding-left: 4px; padding-right: 3px; }
td.active { background: #ffc; outline: 1px solid #217346; outline-offset: -1px; border-color: #217346; }
.money { display: flex; justify-content: space-between; }
.vscroll { display: flex; flex-direction: column; width: 13px; padding: 1px 1px 0 1px; background: #e6e6e6; }
.vscroll button { height: 10px; border: 1px solid #999; background: #fff; }
.vtrack { flex: 1; padding-top: 211px; background: #dadada; }
.vthumb { height: 65px; border: 1px solid #ababab; background: #fff; }

/* sheet tabs and status */
.sheettabs { display: flex; align-items: center; height: 16px; padding-left: 14px; }
.nav { width: 6px; margin-right: 8px; }
.tab {
  align-self: flex-start;
  height: 14px;
  width: 63px;
  margin-left: 13px;
  background: #fff;
  border-bottom: 1px solid #217346;
  color: #217346;
  font-weight: 700;
  font-size: 9px;
}
.add { margin-left: 16px; }
.hscroll { display: flex; align-items: center; margin-left: auto; width: 42%; height: 10px; }
.hscroll .grip { margin-left: 12px; margin-right: 8px; }
.hscroll button, .hthumb { width: 11px; height: 10px; border: 1px solid #999; background: #fff; }
.htrack { flex: 1; height: 10px; background: #d6d6d6; }
.status { display: flex; align-items: center; height: 14px; padding: 0 5px; background: #f3f3f3; font-size: 7px; }
.access { gap: 1px; margin-left: 13px; }
.views { display: flex; align-items: center; margin-left: auto; height: 14px; color: #666; }
.views button { width: 26px; height: 14px; }
.views .on { outline: 0; }
.zoom { display: flex; align-items: center; gap: 2px; padding: 0 8px; }
.zoom input { width: 70px; height: 8px; appearance: none; background: linear-gradient(#777, #777) center / 100% 1px no-repeat; }
.zoom input::-webkit-slider-thumb { appearance: none; width: 3px; height: 8px; background: #555; }

/* taskbar */
.taskbar {
  display: grid;
  grid-template-columns: 1fr 412px 1fr;
  align-items: center;
  height: 32px;
  background: linear-gradient(90deg, #272325, #331d1f 25%, #351c1e 65%, #25211f 95%);
  color: #fff;
  line-height: 11px;
}
.weather { display: flex; align-items: center; gap: 4px; padding-left: 13px; }
.weather span { color: #c8c8c8; }
.apps { display: grid; grid-template-columns: repeat(14, 1fr); }
.apps button { position: relative; height: 28px; margin: 0 1px; border-radius: 3px; }
.apps svg { width: 18px; height: 18px; }
.run::after {
  content: "";
  position: absolute;
  bottom: 1px;
  width: 4px;
  height: 2px;
  border-radius: 1px;
  background: #a09a9a;
}
.apps .cur { background: #4a3436; }
.cur::after { width: 11px; background: #4cc2ff; }
.tray { display: flex; align-items: center; justify-content: flex-end; gap: 5px; padding-right: 11px; }
.lang { margin: 0 7px 0 5px; text-align: center; }
.clock { margin-left: 5px; text-align: right; }
.badge {
  width: 13px; height: 13px; line-height: 13px;
  border-radius: 50%;
  background: #4cc2ff; color: #123;
  font-size: 7px;
  text-align: center;
}

/* notification */
.toast {
  position: absolute;
  right: 12px;
  bottom: 42px;
  width: 241px;
  padding: 8px 11px 11px;
  border-radius: 4px;
  background: #1e1e1e;
  box-shadow: 0 1px 4px #0008;
  color: #fff;
}
.thead { display: flex; align-items: center; gap: 5px; }
.thead button { margin-left: 12px; }
.thead span { margin-right: auto; }
.tbody { display: flex; align-items: center; gap: 12px; margin-top: 13px; padding-right: 28px; font-size: 9px; line-height: 13px; }
.td { color: #c5c5c5; }
```
